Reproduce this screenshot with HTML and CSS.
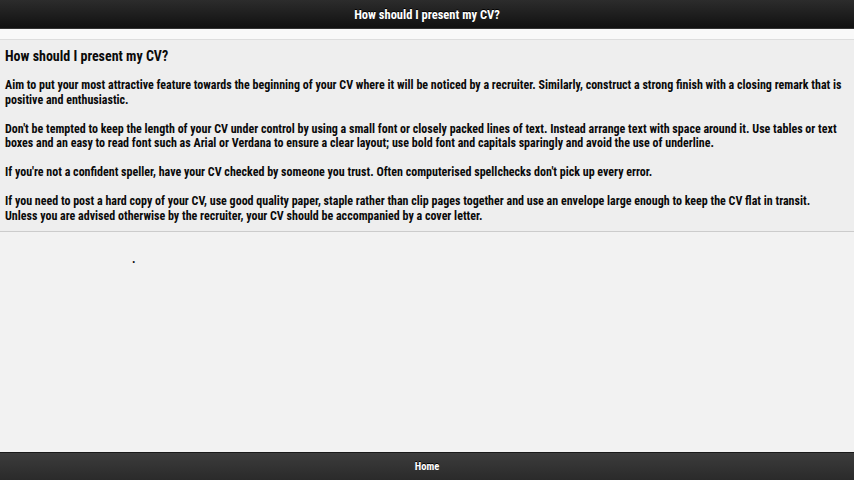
FILE: index.html
```html
<!DOCTYPE html>
<html>
<head>
<meta charset="utf-8">
<link rel="stylesheet" href="styles.css">
</head>
<body>
<div class="page">
  <header class="bar top"><h1 class="title">How should I present my CV?</h1></header>
  <div class="strip"></div>
  <main class="content">
    <section class="article">
      <h2 class="heading">How should I present my CV?</h2>
      <p>Aim to put your most attractive feature towards the beginning of your CV where it will be noticed by a recruiter. Similarly, construct a strong finish with a closing remark that is positive and enthusiastic.</p>
      <p>Don't be tempted to keep the length of your CV under control by using a small font or closely packed lines of text. Instead arrange text with space around it. Use tables or text boxes and an easy to read font such as Arial or Verdana to ensure a clear layout; use bold font and capitals sparingly and avoid the use of underline.</p>
      <p>If you're not a confident speller, have your CV checked by someone you trust. Often computerised spellchecks don't pick up every error.</p>
      <p>If you need to post a hard copy of your CV, use good quality paper, staple rather than clip pages together and use an envelope large enough to keep the CV flat in transit. Unless you are advised otherwise by the recruiter, your CV should be accompanied by a cover letter.</p>
    </section>
    <div class="extra"><span class="dot">.</span></div>
  </main>
  <footer class="bar bottom"><a class="home">Home</a></footer>
</div>
</body>
</html>
```
FILE: styles.css
```css
html, body { margin: 0; padding: 0; height: 100%; }
body {
  font-family: Roboto, "Liberation Sans", Arial, sans-serif;
  font-stretch: 81.5%;
  background: #f2f2f2;
  color: #0a0a0a;
}
.page { display: flex; flex-direction: column; height: 480px; width: 854px; overflow: hidden; }
.bar { color: #fff; text-shadow: 0 -1px 0 #000; }
.top {
  height: 28px;
  background: linear-gradient(#2c2c2c, #111);
  border-bottom: 1px solid #333;
  display: flex; align-items: center; justify-content: center;
}
.title { margin: 0; font-size: 12.5px; font-weight: bold; }
.strip { height: 10px; background: #f9f9f9; border-bottom: 1px solid #ddd; }
.content { flex: 1; display: flex; flex-direction: column; }
.article {
  background: #eee;
  border-bottom: 1px solid #ccc;
  padding: 8px 10px 8px 5px;
  font-size: 12px;
  font-weight: bold;
  line-height: 14.5px;
}
.heading { margin: 0 0 14px; font-size: 14px; line-height: 16px; }
.article p { margin: 0 0 14.5px; }
.article p:last-child { margin-bottom: 0; }
.extra { padding: 20px 0 0 132px; font-size: 12px; font-weight: bold; line-height: 14px; }
.bottom {
  height: 27px;
  background: linear-gradient(#3c3c3c, #2a2a2a);
  border-top: 1px solid #1a1a1a;
  display: flex; align-items: center; justify-content: center;
  font-size: 10.5px; font-weight: bold;
}
.home { color: #fff; }
```
